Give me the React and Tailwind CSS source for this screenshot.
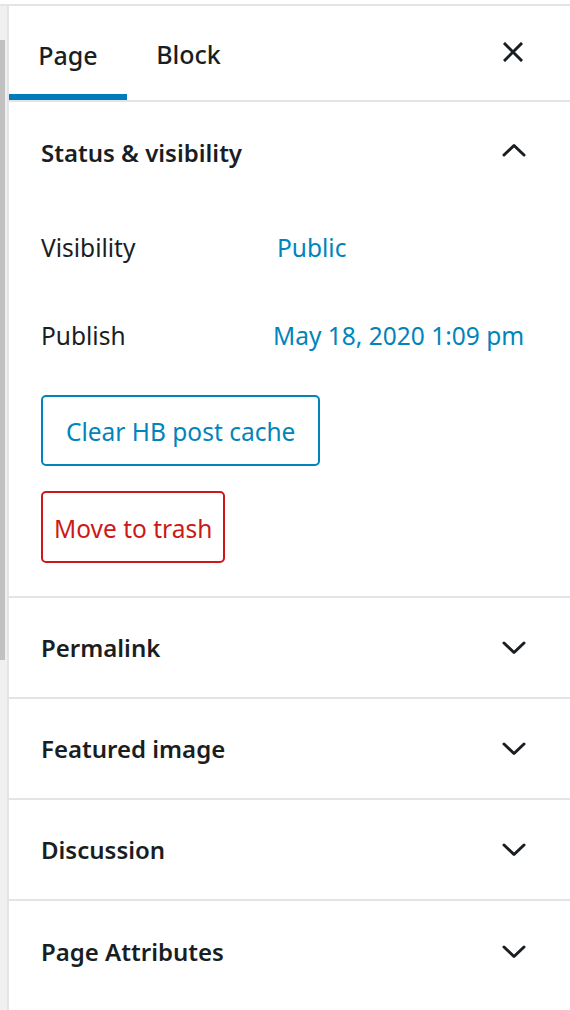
const font = "font-['Noto_Sans',_'Open_Sans',_sans-serif]";

function Chevron({ up }) {
  return (
    <svg width="24" height="14" viewBox="0 0 24 14" fill="none" className="text-[#191e23]">
      <polyline
        points={up ? "2,12 12,2.5 22,12" : "2,2 12,11.5 22,2"}
        stroke="currentColor"
        strokeWidth="3"
        strokeLinecap="round"
        strokeLinejoin="round"
      />
    </svg>
  );
}

function CollapsedPanel({ title, last }) {
  return (
    <div
      className={`flex h-[101px] items-center justify-between pl-[32px] pr-[44px] ${
        last ? "" : "border-b-2 border-[#e2e4e7]"
      }`}
    >
      <span className="pt-[1px] text-[24px] font-semibold text-[#191e23]">{title}</span>
      <div className="pt-[1px]">
        <Chevron />
      </div>
    </div>
  );
}

export default function App() {
  return (
    <div className={`flex h-[1010px] w-[570px] flex-col overflow-hidden bg-white ${font}`}>
      {/* top rule */}
      <div className="h-[4px] bg-white" />
      <div className="h-[2px] bg-[#e2e4e7]" />

      <div className="flex flex-1">
        {/* left gutter with scrollbar */}
        <div className="flex w-[9px] flex-col border-r-2 border-[#e2e4e7] bg-[#f0f0f0]">
          <div className="h-[34px]" />
          <div className="h-[620px] w-[5px] bg-[#c1c1c1]" />
        </div>

        {/* sidebar */}
        <div className="flex flex-1 flex-col">
          {/* tabs */}
          <div className="flex h-[96px] items-stretch border-b-2 border-[#e2e4e7]">
            <div className="flex w-[118px] items-center justify-center border-b-[6px] border-[#007cba] pt-[12px] text-[25px] font-medium text-[#191e23]">
              Page
            </div>
            <div className="flex w-[123px] items-center justify-center pt-[4px] text-[25px] font-medium text-[#191e23]">
              Block
            </div>
            <div className="flex flex-1 items-center justify-end pr-[47px] pb-[2px]">
              <svg width="20" height="20" viewBox="0 0 20 20" className="text-[#191e23]">
                <path d="M2 2 L18 18 M18 2 L2 18" stroke="currentColor" strokeWidth="3" strokeLinecap="square" />
              </svg>
            </div>
          </div>

          {/* status & visibility */}
          <div className="flex flex-col border-b-2 border-[#e2e4e7] pl-[32px] pr-[32px]">
            <div className="flex h-[100px] items-center justify-between pr-[12px]">
              <span className="pt-[2px] text-[24px] font-semibold text-[#191e23]">Status &amp; visibility</span>
              <div className="pb-[4px]">
                <Chevron up />
              </div>
            </div>
            <div className="flex h-[88px] items-center pt-[4px]">
              <span className="w-[232px] text-[24.5px] text-[#191e23]">Visibility</span>
              <span className="pl-[4px] text-[24.5px] text-[#0085ba]">Public</span>
            </div>
            <div className="flex h-[88px] items-center pt-[4px]">
              <span className="w-[232px] text-[24.5px] text-[#191e23]">Publish</span>
              <span className="text-[24.5px] text-[#0085ba]">May 18, 2020 1:09 pm</span>
            </div>
            <div className="mt-[17px] flex">
              <button className="flex h-[71px] items-center rounded-[5px] border-2 border-[#0085ba] px-[23px] pt-[4px] text-[24.5px] text-[#0085ba]">
                Clear HB post cache
              </button>
            </div>
            <div className="mt-[25px] mb-[33px] flex">
              <button className="flex h-[72px] items-center rounded-[5px] border-2 border-[#cc1818] px-[11px] pt-[4px] text-[24.5px] text-[#cc1818]">
                Move to trash
              </button>
            </div>
          </div>

          <CollapsedPanel title="Permalink" />
          <CollapsedPanel title="Featured image" />
          <CollapsedPanel title="Discussion" />
          <CollapsedPanel title="Page Attributes" last />
        </div>
      </div>
    </div>
  );
}
